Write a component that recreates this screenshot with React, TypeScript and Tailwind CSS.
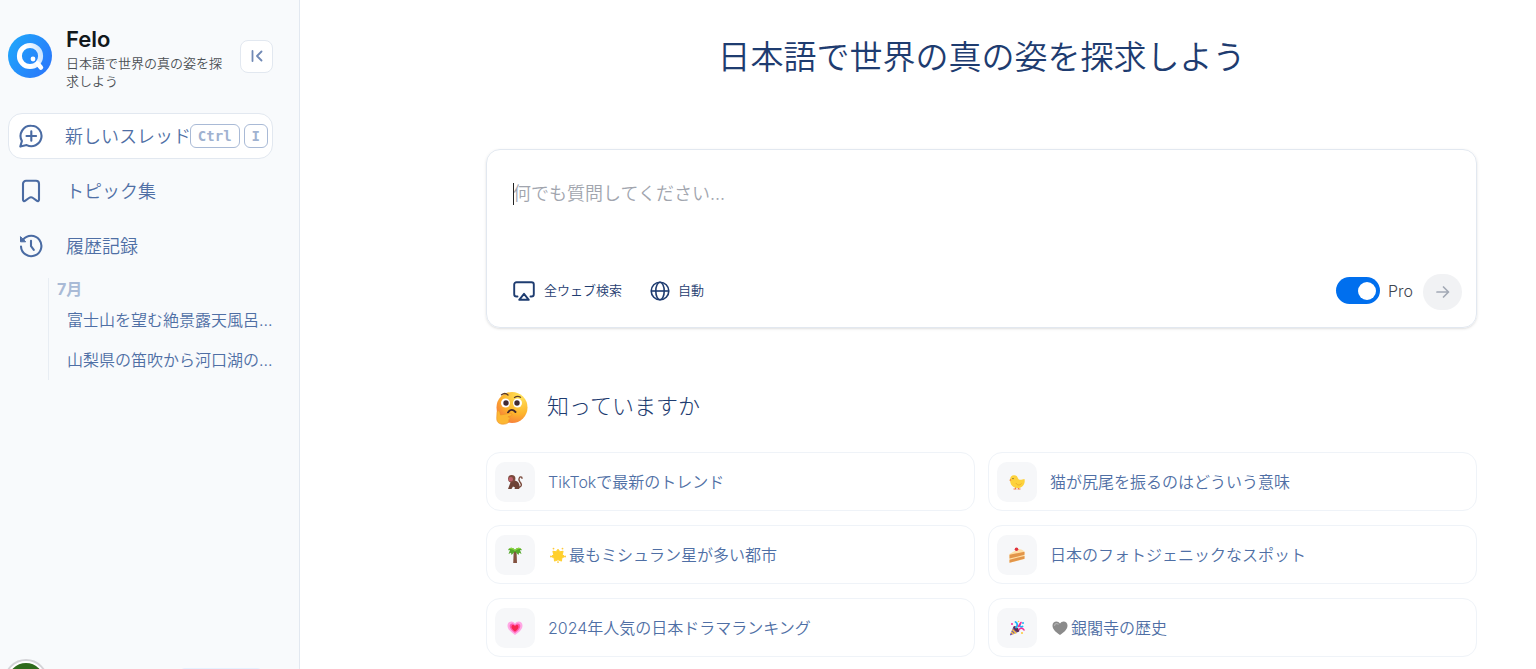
import React, { useState } from 'react';

const FONT = "font-['Inter','Noto_Sans_CJK_JP',sans-serif]";

const Logo = () => (
    <svg viewBox="0 0 44 44" className="w-11 h-11 shrink-0" aria-hidden="true">
        <defs>
            <linearGradient id="logoBg" x1="0" y1="0.2" x2="1" y2="0.8">
                <stop offset="0" stopColor="#1fa6fb" />
                <stop offset="1" stopColor="#2a76fb" />
            </linearGradient>
            <linearGradient id="logoRing" x1="0" y1="0.6" x2="1" y2="0.3">
                <stop offset="0.4" stopColor="#ffffff" />
                <stop offset="1" stopColor="#cfe6ff" />
            </linearGradient>
        </defs>
        <circle cx="22" cy="22" r="22" fill="url(#logoBg)" />
        <circle cx="22" cy="22" r="10.6" fill="none" stroke="url(#logoRing)" strokeWidth="5" />
        <path d="M29.5 29.5l3.4 4" stroke="#fff" strokeWidth="4.6" strokeLinecap="round" />
        <circle cx="25" cy="25" r="2.4" fill="#fff" />
    </svg>
);

const CollapseIcon = () => (
    <svg viewBox="0 0 16 16" className="w-4 h-4" fill="none" stroke="#7089b5" strokeWidth="1.8" strokeLinecap="round" strokeLinejoin="round">
        <path d="M3.500 3v10M12.500 3.500L8 8l4.500 4.500" />
    </svg>
);

const NewThreadIcon = () => (
    <svg viewBox="0 0 24 24" className="w-6 h-6" fill="none" stroke="#4a6ba3" strokeWidth="2.1" strokeLinecap="round" strokeLinejoin="round">
        <path d="M12.3 1.8a10.2 10.2 0 1 1-4.6 19.3L1.3 22.6l1.6-5.6A10.2 10.2 0 0 1 12.3 1.8z" />
        <path d="M12.3 7.2v9.6M7.5 12h9.6" />
    </svg>
);

const BookmarkIcon = () => (
    <svg viewBox="0 0 24 24" className="w-6 h-6" fill="none" stroke="#4a6ba3" strokeWidth="2.1" strokeLinejoin="round">
        <path d="M7 1.8h10a3 3 0 0 1 3 3v16c0 1.200-1.200 1.700-2 1.100L14 19c-1.300-.9-2.700-.9-4 0l-4 2.900c-.8.6-2 .1-2-1.100v-16a3 3 0 0 1 3-3z" />
    </svg>
);

const HistoryIcon = () => (
    <svg viewBox="0 0 24 24" className="w-6 h-6" fill="none" stroke="#4a6ba3" strokeWidth="2.1" strokeLinecap="round" strokeLinejoin="round">
        <path d="M2 12.5A10.2 10.2 0 1 0 4 5.900" />
        <path d="M12 6.800v5.400l2.800 3.700" />
        <path d="M1.500 3v4.800h4.800z" fill="#4a6ba3" strokeWidth="1" />
    </svg>
);

const WebIcon = () => (
    <svg viewBox="0 0 22 20" className="w-[22px] h-5" fill="none" stroke="#1e3c70" strokeWidth="1.9" strokeLinecap="round" strokeLinejoin="round">
        <path d="M4.5 15.5H3.500A2.300 2.300 0 0 1 1.200 13.200V3.600A2.300 2.300 0 0 1 3.500 1.300h15a2.300 2.300 0 0 1 2.300 2.300v9.600a2.300 2.300 0 0 1-2.300 2.300h-1" />
        <path d="M11 12.800l4.800 6H6.200z" />
    </svg>
);

const GlobeIcon = () => (
    <svg viewBox="0 0 20 20" className="w-5 h-5" fill="none" stroke="#1e3c70" strokeWidth="1.6">
        <circle cx="10" cy="10" r="8.8" />
        <ellipse cx="10" cy="10" rx="4.2" ry="8.8" />
        <path d="M1.200 10h17.600" />
    </svg>
);

const ArrowIcon = () => (
    <svg viewBox="0 0 16 16" className="w-4 h-4" fill="none" stroke="#a3a9b5" strokeWidth="1.7" strokeLinecap="round" strokeLinejoin="round">
        <path d="M2 8h11.500M8.500 3l5 5-5 5" />
    </svg>
);

const Thinking = () => (
    <svg viewBox="0 0 34 34" className="w-[34px] h-[34px]" role="img" aria-label="考える顔">
        <defs>
            <radialGradient id="face" cx="0.75" cy="0.15" r="1">
                <stop offset="0" stopColor="#ffe45c" />
                <stop offset="0.55" stopColor="#fdb52c" />
                <stop offset="1" stopColor="#f5703f" />
            </radialGradient>
        </defs>
        <circle cx="17" cy="16.500" r="15.5" fill="url(#face)" />
        <circle cx="10.500" cy="12" r="4.5" fill="#fff" />
        <circle cx="22.500" cy="12" r="4.5" fill="#fff" />
        <circle cx="11" cy="12" r="2.7" fill="#402a32" />
        <circle cx="22" cy="12" r="2.7" fill="#402a32" />
        <path d="M6.500 3.800q3.500-2.800 6.500.2M19.500 6.500q3-2 6-.3" fill="none" stroke="#5c3b2a" strokeWidth="1.3" strokeLinecap="round" />
        <path d="M13 21.500q3.500-5 7.500-.5" fill="none" stroke="#43282b" strokeWidth="1.9" strokeLinecap="round" />
        <path d="M2 21c0-1.600 2.400-1.600 2.800 0l.8 3 9.500-1.800c2-.3 2.500 2 .8 2.600l-3 1c2.600.4 2.600 2.400.8 3 .8 1.800-.5 4.400-5.500 4.400-4.600 0-6.600-2.400-6.500-6z" fill="#fcb733" stroke="#ec9026" strokeWidth="0.6" />
    </svg>
);

const Monkey = () => (
    <svg viewBox="0 0 16 16" className="w-4 h-4">
        <path d="M11.500 13.500c3-.5 3.500-2.500 2.200-4.500-1.200-1.800-2.700-3-1.500-5C13 2.500 15 2.500 15 4.200" fill="none" stroke="#7a4a3c" strokeWidth="1.4" strokeLinecap="round" />
        <path d="M4 7c3.500-1.500 7.500 0 8.300 3.500.4 2 .5 4-.3 4.500H7.500l.5-1.500L6 12.500 4.500 15H1l1.500-4z" fill="#6f4336" />
        <circle cx="4.700" cy="4.800" r="3.7" fill="#7a4a3c" />
        <circle cx="3.800" cy="5.200" r="2.2" fill="#c0606c" />
    </svg>
);

const Chick = () => (
    <svg viewBox="0 0 16 16" className="w-4 h-4">
        <path d="M6.500 13v2M9.500 13v2M4.500 15h3M8.500 15h3" stroke="#ef7b45" strokeWidth="1" />
        <path d="M1.200 4.800a4 4 0 0 1 7.800-.6c.5 1.500 1.800 1.700 3.200 1.500l3.300-.7c.9 4-1 9-7.200 9C3 14 .5 9 1.200 4.800z" fill="#fdd23c" />
        <path d="M7 9c1 2.500 4 2.500 5.500.5" fill="none" stroke="#eeae2d" strokeWidth="1" />
        <path d="M2 4.800L0 6.200l2.200.8z" fill="#f08a3e" />
        <circle cx="4" cy="4.600" r="0.6" fill="#4a3535" />
    </svg>
);

const Palm = () => (
    <svg viewBox="0 0 16 16" className="w-4 h-4">
        <path d="M6.700 4h2.800l.5 12H6.200z" fill="#83513f" />
        <path d="M8 3C6-.5 2 .2 1 3.200L3 3 1.500 7l2.500-1.200L4.500 8 8 4.500 11.500 8l.6-2.200L14.500 7 13 3l2 .2C14 .2 10 -.5 8 3z" fill="#55a82b" />
        <path d="M8 3C6 0 3 .2 2 2.200 4 1.500 6 2 8 4c2-2 4-2.500 6-1.800C13 .2 10 0 8 3z" fill="#8bd63f" />
    </svg>
);

const Cake = () => (
    <svg viewBox="0 0 16 16" className="w-4 h-4">
        <path d="M.5 7L9 2c3 0 5.500 1 6.500 3v7l-15 3.800z" fill="#ffdfa6" />
        <path d="M.5 7.800l15-3v3l-15 3.700zM.5 12.700l15-3.700v2.800l-15 4z" fill="#e2954a" />
        <circle cx="7.500" cy="2.200" r="1.800" fill="#e0323e" />
    </svg>
);

const Heart = () => (
    <svg viewBox="0 0 16 16" className="w-4 h-4">
        <path d="M8 15C3 11.500.5 9 .5 5.500.5 1 6 0 8 3.500 10 0 15.500 1 15.500 5.500 15.500 9 13 11.500 8 15z" fill="#ffa8e4" />
        <path d="M8 13C4.500 10.500 2.700 8.500 2.700 6c0-3 3.800-3.500 5.300-.8C9.500 2.500 13.300 3 13.300 6c0 2.500-1.800 4.500-5.300 7z" fill="#ff5bae" />
        <path d="M8 11.500C5.500 9.700 4.500 8.200 4.500 6.700c0-2 2.500-2.200 3.500-.4 1-1.800 3.500-1.600 3.500.4 0 1.500-1 3-3.500 4.800z" fill="#f6264f" />
    </svg>
);

const Party = () => (
    <svg viewBox="0 0 16 16" className="w-4 h-4">
        <path d="M4.500 6.500L1 14.500c-.2.6.2 1 .8.800L10 11.500z" fill="#7a5aa8" />
        <path d="M3.300 9.500l4 4M2.200 12l2.300 2.300" stroke="#fcc83a" strokeWidth="1.3" />
        <ellipse cx="7.300" cy="9" rx="1.8" ry="3.7" transform="rotate(-45 7.3 9)" fill="#5c2f50" />
        <path d="M7 7.500C9 6 8.500 3 6.500 2M11 4.500c-.8 2 .5 3 2.500 2" fill="none" stroke="#1fb4f5" strokeWidth="1.8" strokeLinecap="round" />
        <path d="M10 9.500c1.500-2 4-1.500 5 .5M9.500 6.500l2.500-4" fill="none" stroke="#f42d9c" strokeWidth="1.6" strokeLinecap="round" />
        <circle cx="3" cy="4" r="1" fill="#f42d9c" />
        <circle cx="14" cy="3" r="1" fill="#1fb4f5" />
        <circle cx="13" cy="13" r="1" fill="#fcc83a" />
        <circle cx="9.500" cy="1.500" r="0.8" fill="#fcc83a" />
    </svg>
);

const Star = () => (
    <svg viewBox="0 0 16 16" className="w-4 h-4 shrink-0">
        <path d="M8 2.200l1.900 2.600 3.200-.6-.7 3.200 2.100 2.200-2.700 1.500-.3 3-3.500-1.300-3.500 1.300-.3-3-2.700-1.500 2.100-2.200-.7-3.200 3.200.6z" fill="#ffd02e" stroke="#ffd02e" strokeWidth="1" strokeLinejoin="round" />
        <g fill="#ffc93a">
            <circle cx="3.500" cy="1.600" r="0.9" />
            <circle cx="12.500" cy="1.600" r="0.9" />
            <circle cx="0.900" cy="9.500" r="0.9" />
            <circle cx="15.100" cy="9.500" r="0.9" />
            <circle cx="8" cy="15.100" r="0.9" />
        </g>
    </svg>
);

const GreyHeart = () => (
    <svg viewBox="0 0 16 16" className="w-4 h-4 shrink-0">
        <path d="M8 15C3 11.500.5 9 .5 5.500.5 1 6 0 8 3.500 10 0 15.500 1 15.500 5.500 15.500 9 13 11.500 8 15z" fill="#8b8b8b" />
        <path d="M2.500 5.500C3 3.500 5 3 6.200 4.200" fill="none" stroke="#b0b0b0" strokeWidth="1.2" strokeLinecap="round" />
    </svg>
);

const topics = [
    { icon: <Monkey />, text: 'TikTokで最新のトレンド' },
    { icon: <Chick />, text: '猫が尻尾を振るのはどういう意味' },
    { icon: <Palm />, prefix: <Star />, text: '最もミシュラン星が多い都市' },
    { icon: <Cake />, text: '日本のフォトジェニックなスポット' },
    { icon: <Heart />, text: '2024年人気の日本ドラマランキング' },
    { icon: <Party />, prefix: <GreyHeart />, text: '銀閣寺の歴史' },
];

const threads = ['富士山を望む絶景露天風呂...', '山梨県の笛吹から河口湖の...'];

const Sidebar = () => (
    <aside className="w-[300px] shrink-0 h-screen overflow-hidden flex flex-col bg-[#f8fafc] border-r border-[#e2e8f0] pl-2 pr-[26px] pt-6">
        <div className="flex items-center h-16">
            <Logo />
            <div className="ml-[14px] w-[162px] pt-px">
                <h2 className="text-[22px] leading-[30px] font-semibold text-[#11181c]">Felo</h2>
                <p className="text-[13px] leading-[18px] text-[#4b5055]">日本語で世界の真の姿を探求しよう</p>
            </div>
            <button aria-label="サイドバーを閉じる" className="ml-auto w-[33px] h-[33px] flex items-center justify-center bg-white border border-[#e2e8f0] rounded-lg">
                <CollapseIcon />
            </button>
        </div>

        <nav className="mt-[25px] flex flex-col gap-[9px] text-[18px] text-[#4f6fa5]">
            <button className="h-[46px] flex items-center bg-white border border-[#e2e8f0] rounded-[14px] pl-[10px] pr-1 whitespace-nowrap">
                <NewThreadIcon />
                <span className="ml-[22px] w-[124px] text-left">新しいスレッド</span>
                <span className="ml-auto flex gap-1 font-['DejaVu_Sans_Mono',monospace] text-sm font-bold text-[#a0b2d0]">
                    <kbd className="h-6 px-[7px] flex items-center border border-[#a9bad6] rounded-md font-[inherit]">Ctrl</kbd>
                    <kbd className="h-6 px-[7px] flex items-center border border-[#a9bad6] rounded-md font-[inherit]">I</kbd>
                </span>
            </button>
            <a href="#topics" className="h-[46px] flex items-center gap-[23px] pl-[11px]">
                <BookmarkIcon />
                <span>トピック集</span>
            </a>
            <a href="#history" className="h-[46px] flex items-center gap-[23px] pl-[11px]">
                <HistoryIcon />
                <span>履歴記録</span>
            </a>
        </nav>

        <div className="ml-10 mt-[9px] border-l border-[#e8edf3] pl-2">
            <h3 className="text-base leading-[22px] font-bold text-[#a9bad6]">7月</h3>
            <ul className="text-base text-[#4f6fa5]">
                {threads.map(t => (
                    <li key={t}>
                        <a href="#thread" className="block h-10 leading-10 pl-[10px] whitespace-nowrap">{t}</a>
                    </li>
                ))}
            </ul>
        </div>

        {/* Account */}
        <div className="mt-auto h-[10px] shrink-0 flex items-start justify-between pr-[10px]">
            <button aria-label="アカウント" className="-ml-1 w-11 h-11 shrink-0 rounded-full border-2 border-[#d4d4d8] bg-white p-[2px]">
                <span className="block w-full h-full rounded-full bg-[#2f6b1c]" />
            </button>
            <div className="mt-[9px] w-[84px] h-8 rounded-md bg-[#e6f1fe]" />
        </div>
    </aside>
);

const SearchBox = () => {
    const [query, setQuery] = useState('');
    const [pro, setPro] = useState(true);

    return (
        <form className="mt-[68px] border border-[#e2e8f0] rounded-[14px] shadow-sm pl-[26px] pr-[14px] pt-7 pb-[17px]" onSubmit={e => e.preventDefault()}>
            <div className="relative">
                <textarea
                    aria-label="質問"
                    value={query}
                    onChange={e => setQuery(e.target.value)}
                    placeholder="何でも質問してください..."
                    className="block w-full h-24 text-[18px] leading-8 text-[#1e3c70] placeholder:text-[#a1a5ae] resize-none outline-none"
                />
                {/* Caret */}
                {!query && <span className="absolute left-0 top-[5px] w-px h-[22px] bg-[#222]" />}
            </div>
            <div className="flex items-start text-[13px] text-[#1e3c70]">
                <button type="button" className="h-[34px] flex items-center gap-[9px]"><WebIcon /> 全ウェブ検索</button>
                <button type="button" className="h-[34px] ml-7 flex items-center gap-2"><GlobeIcon /> 自動</button>
                <label className="h-[33px] ml-auto flex items-center gap-2 text-base text-[#3f4650]">
                    <input type="checkbox" checked={pro} onChange={e => setPro(e.target.checked)} className="peer sr-only" />
                    <span className="w-11 h-[27px] rounded-full bg-gray-300 peer-checked:bg-[#006fee] flex items-center justify-end px-1">
                        <span className="w-[18px] h-[18px] rounded-full bg-white" />
                    </span>
                    Pro
                </label>
                <button type="submit" aria-label="送信" className="ml-[10px] w-[39px] h-9 rounded-full bg-[#f1f2f4] flex items-center justify-center">
                    <ArrowIcon />
                </button>
            </div>
        </form>
    );
};

export default function App() {
    return (
        <div className={`${FONT} flex h-screen overflow-hidden bg-white font-[350]`}>
            <Sidebar />
            <main className="flex-1 min-w-0 pl-[186px] pr-[59px] pt-[33px]">
                <h1 className="text-center text-[33px] leading-[48px] text-[#1e3c70]">日本語で世界の真の姿を探求しよう</h1>
                <SearchBox />

                <h2 className="mt-[60px] pl-[9px] flex items-start gap-[18px] text-[22px] leading-9 font-light text-[#1e3c70]">
                    <span className="pt-[3px]"><Thinking /></span>
                    知っていますか
                </h2>
                <div className="mt-[27px] grid grid-cols-2 gap-x-[13px] gap-y-[14px]">
                    {topics.map(t => (
                        <button key={t.text} className="h-[59px] flex items-center border border-[#eff3f8] rounded-[14px] pl-2 text-left">
                            <span className="w-10 h-10 shrink-0 rounded-[10px] bg-[#f6f7f9] flex items-center justify-center">{t.icon}</span>
                            <span className="ml-[13px] flex items-center text-base text-[#4f6fa5]">
                                {t.prefix && <span className="pl-[2px] pr-[3px]">{t.prefix}</span>}
                                {t.text}
                            </span>
                        </button>
                    ))}
                </div>
            </main>
        </div>
    );
}
